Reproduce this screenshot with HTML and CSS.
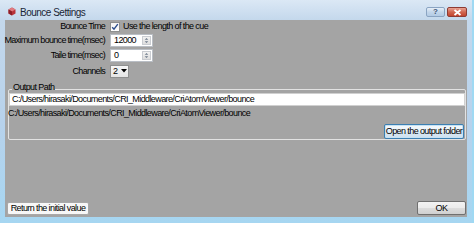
FILE: index.html
```html
<!DOCTYPE html>
<html>
<head>
<meta charset="utf-8">
<link rel="stylesheet" href="styles.css">
</head>
<body>
<div class="window">
  <div class="titlebar">
    <svg class="appicon" width="8" height="9" viewBox="0 0 8 9"><path d="M4 0.5 L7.5 2.5 L7.5 6.5 L4 8.5 L0.5 6.5 L0.5 2.5 Z" fill="#b8323a"/><path d="M4 0.5 L7.5 2.5 L4 4.5 L0.5 2.5 Z" fill="#e07a80"/><path d="M4 4.5 L4 8.5 L0.5 6.5 L0.5 2.5 Z" fill="#8e1f28"/></svg>
    <span class="title">Bounce Settings</span>
    <div class="caption-btns">
      <span class="cbtn help">?</span>
      <span class="cbtn close"><svg width="9" height="7" viewBox="0 0 9 7"><path d="M1.5 1 L7.5 6 M7.5 1 L1.5 6" stroke="#fff" stroke-width="1.8"/></svg></span>
    </div>
  </div>
  <div class="client">
    <div class="form">
      <span class="lbl">Bounce Time</span>
      <div class="ctl">
        <span class="check"><svg width="8" height="8" viewBox="0 0 8 8"><path d="M1.2 4.2 L3 6.2 L6.8 1.2" fill="none" stroke="#2b4d8c" stroke-width="1.4"/></svg></span>
        <span class="checktext">Use the length of the cue</span>
      </div>
      <span class="lbl">Maximum bounce time(msec)</span>
      <div class="spin"><span class="val">12000</span><span class="arrows"><svg width="7" height="9" viewBox="0 0 7 9"><path d="M1 3.5 L3.5 1 L6 3.5 Z M1 5.5 L3.5 8 L6 5.5 Z" fill="#6e7b8b"/></svg></span></div>
      <span class="lbl">Taile time(msec)</span>
      <div class="spin"><span class="val">0</span><span class="arrows"><svg width="7" height="9" viewBox="0 0 7 9"><path d="M1 3.5 L3.5 1 L6 3.5 Z M1 5.5 L3.5 8 L6 5.5 Z" fill="#6e7b8b"/></svg></span></div>
      <span class="lbl">Channels</span>
      <div class="combo"><span class="val">2</span><svg class="drop" width="6" height="4" viewBox="0 0 6 4"><path d="M0 0 L6 0 L3 3.5 Z" fill="#000"/></svg></div>
    </div>
    <div class="group">
      <span class="legend">Output Path</span>
      <div class="pathbox">C:/Users/hirasaki/Documents/CRI_Middleware/CriAtomViewer/bounce</div>
      <div class="pathlabel">C:/Users/hirasaki/Documents/CRI_Middleware/CriAtomViewer/bounce</div>
      <div class="grouprow"><button class="btn focus open">Open the output folder</button></div>
    </div>
    <div class="footer">
      <button class="btn plain reset">Return the initial value</button>
      <button class="btn ok">OK</button>
    </div>
  </div>
</div>
</body>
</html>
```
FILE: styles.css
```css
html, body {
  margin: 0;
  padding: 0;
}
body {
  width: 474px;
  height: 223px;
  overflow: hidden;
  font-family: "Liberation Sans", Arial, sans-serif;
  font-size: 9px;
  letter-spacing: -0.6px;
  color: #000;
}
.window {
  width: 474px;
  height: 223px;
  display: flex;
  flex-direction: column;
  background: linear-gradient(to bottom, #dbe8f5 0, #c4d8ec 20px, #b7d2ec 55%, #a6d6f1 100%);
  border-right: 2px solid #9fd9f3;
  box-sizing: border-box;
}
.titlebar {
  height: 20px;
  display: flex;
  align-items: flex-start;
  padding-left: 8px;
  box-sizing: border-box;
}
.appicon {
  margin-top: 7px;
}
.title {
  margin-left: 4px;
  margin-top: 7px;
  font-size: 10px;
  letter-spacing: -0.5px;
  line-height: 12px;
  color: #1a2636;
}
.caption-btns {
  margin-left: auto;
  margin-top: 7px;
  margin-right: 5px;
  display: flex;
  gap: 2px;
}
.cbtn {
  height: 10px;
  box-sizing: border-box;
  border-radius: 2px;
  display: flex;
  align-items: center;
  justify-content: center;
}
.help {
  width: 19px;
  border: 1px solid #8aa4c2;
  background: linear-gradient(to bottom, #e6eff8, #c3d6ea 50%, #b3cbe4);
  color: #3d5473;
  font-size: 8px;
  font-weight: bold;
  letter-spacing: 0;
  line-height: 8px;
}
.close {
  width: 20px;
  border: 1px solid #8d3b33;
  background: linear-gradient(to bottom, #e9a394, #d06650 50%, #c2442e);
}
.client {
  flex: 1;
  margin: 0 5px 6px 5px;
  background: #a4a4a4;
  display: flex;
  flex-direction: column;
}
.form {
  display: grid;
  grid-template-columns: 100px auto;
  grid-template-rows: 11px 13px 13px 14px;
  row-gap: 2px;
  column-gap: 5px;
  margin-top: 1px;
  align-items: center;
  justify-items: start;
}
.lbl {
  justify-self: end;
  white-space: nowrap;
  line-height: 11px;
  letter-spacing: -0.7px;
}
.ctl {
  display: flex;
  align-items: center;
}
.check {
  width: 10px;
  height: 10px;
  box-sizing: border-box;
  border: 1px solid #8e8f8f;
  background: linear-gradient(to bottom, #f4f4f4, #ffffff);
  display: flex;
  align-items: center;
  justify-content: center;
}
.checktext {
  margin-left: 3px;
  line-height: 11px;
  white-space: nowrap;
}
.spin {
  width: 43px;
  height: 13px;
  box-sizing: border-box;
  border: 1px solid #b9bec5;
  background: #fff;
  display: flex;
  align-items: stretch;
}
.spin .val {
  flex: 1;
  padding-left: 3px;
  line-height: 11px;
}
.arrows {
  width: 9px;
  margin: 1px;
  background: linear-gradient(to bottom, #f2f2f2, #dedede);
  border: 1px solid #c9ccd1;
  box-sizing: border-box;
  display: flex;
  align-items: center;
  justify-content: center;
}
.arrows svg {
  width: 5px;
  height: 7px;
}
.combo {
  width: 19px;
  height: 13px;
  box-sizing: border-box;
  border: 1px solid #8e8f8f;
  background: linear-gradient(to bottom, #f6f6f6, #e4e4e4);
  display: flex;
  align-items: center;
}
.combo .val {
  padding-left: 2px;
  line-height: 11px;
}
.combo .drop {
  margin-left: 4px;
}
.group {
  position: relative;
  margin: 11px 1px 0 3px;
  border: 1px solid #e2e2e2;
  border-radius: 2px;
  padding-top: 3px;
}
.legend {
  position: absolute;
  top: -8px;
  left: 3px;
  padding: 0 1px;
  background: #a4a4a4;
  line-height: 11px;
}
.pathbox {
  height: 13px;
  box-sizing: border-box;
  background: #fff;
  border: 1px solid #d0d0d0;
  padding-left: 2px;
  line-height: 11px;
  white-space: nowrap;
}
.pathlabel {
  margin-top: 1px;
  margin-left: -1px;
  line-height: 12px;
  white-space: nowrap;
}
.grouprow {
  display: flex;
  justify-content: flex-end;
  margin-top: 5px;
  padding-right: 1px;
}
.btn {
  font-family: inherit;
  font-size: 9px;
  letter-spacing: -0.6px;
  color: #000;
  padding: 0;
  margin: 0;
  box-sizing: border-box;
  border-radius: 2px;
  border: 1px solid #707070;
  background: linear-gradient(to bottom, #f3f3f3 0, #ebebeb 50%, #dddddd 51%, #d0d0d0 100%);
  line-height: 11px;
  white-space: nowrap;
}
.focus {
  border: 1px solid #3c7fb1;
  box-shadow: inset 0 0 0 1px #c7e2f4;
  background: linear-gradient(to bottom, #f5f9fc 0, #e8f1f8 50%, #d9e8f3 51%, #cfe1ef 100%);
}
.open {
  width: 80px;
  height: 15px;
}
.footer {
  margin-top: auto;
  display: flex;
  justify-content: space-between;
  align-items: flex-end;
  padding: 0 1px 2px 2px;
}
.plain {
  border: 1px solid #a8a8a8;
  background: #f7f7f7;
}
.reset {
  width: 82px;
  height: 13px;
}
.ok {
  width: 49px;
  height: 14px;
}
```
